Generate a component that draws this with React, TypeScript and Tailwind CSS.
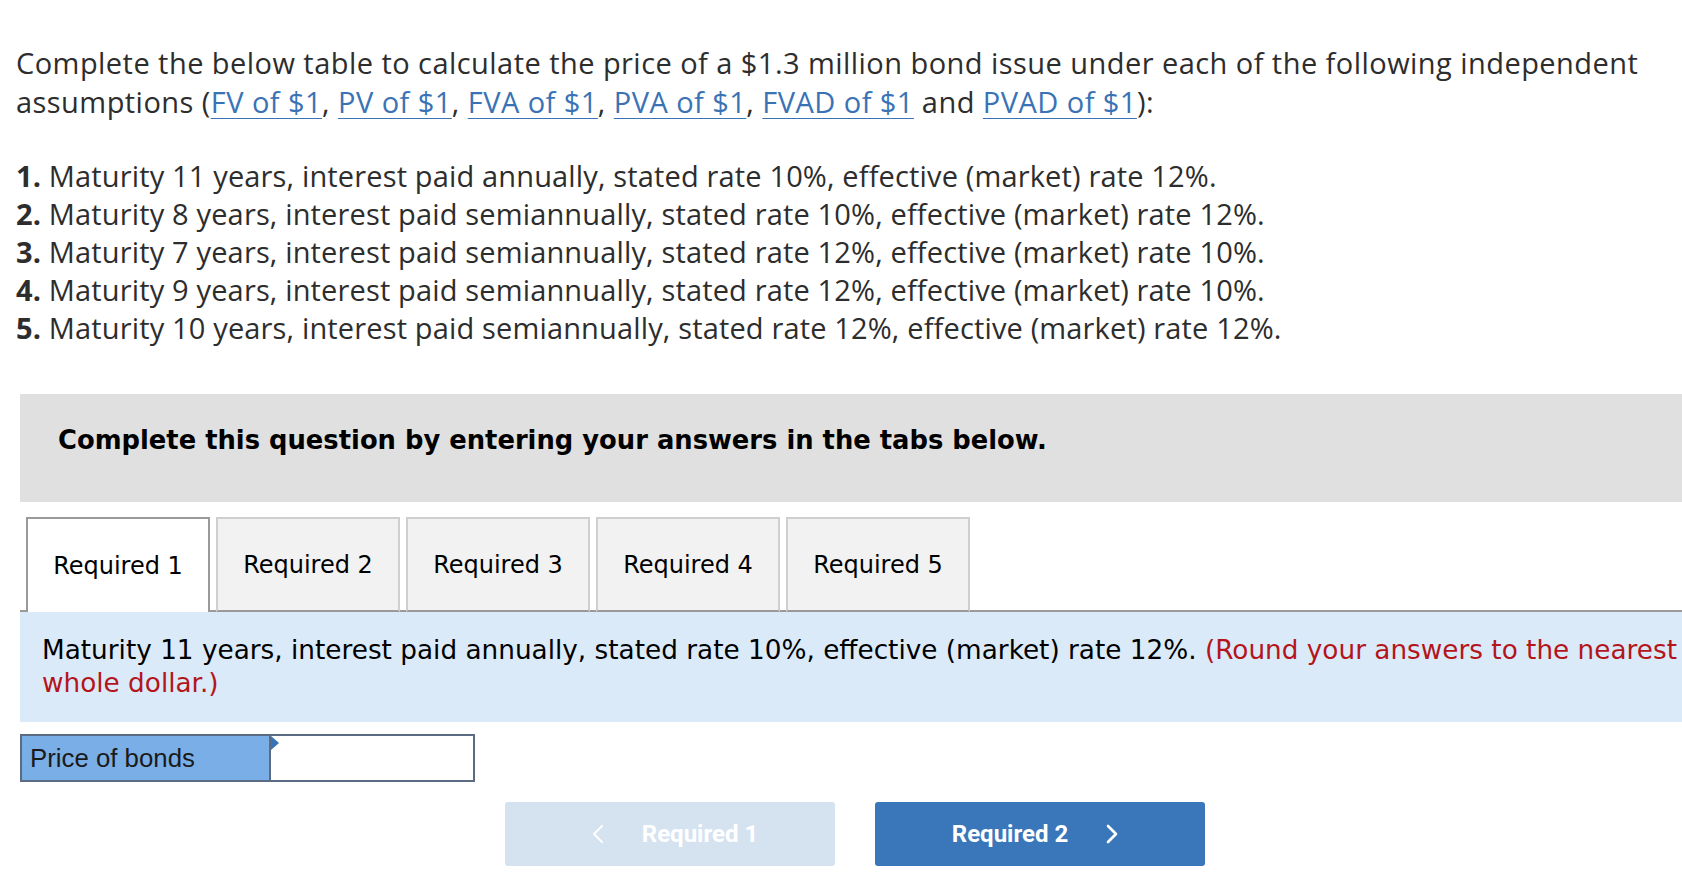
import { ChevronLeft, ChevronRight } from 'lucide-react';

const LINKS = ['FV of $1', 'PV of $1', 'FVA of $1', 'PVA of $1', 'FVAD of $1', 'PVAD of $1'];

const ITEMS = [
  'Maturity 11 years, interest paid annually, stated rate 10%, effective (market) rate 12%.',
  'Maturity 8 years, interest paid semiannually, stated rate 10%, effective (market) rate 12%.',
  'Maturity 7 years, interest paid semiannually, stated rate 12%, effective (market) rate 10%.',
  'Maturity 9 years, interest paid semiannually, stated rate 12%, effective (market) rate 10%.',
  'Maturity 10 years, interest paid semiannually, stated rate 12%, effective (market) rate 12%.',
];

const TABS = ['Required 1', 'Required 2', 'Required 3', 'Required 4', 'Required 5'];

function Link({ children }: { children: string }) {
  return <a className="text-[#3a73b5] underline underline-offset-[5px] decoration-1">{children}</a>;
}

export default function App() {
  return (
    <div className="w-full h-[873px] overflow-hidden bg-white">
      <div className="w-[1710px] pt-[43px]">
        {/* question text */}
        <div className="pl-4 font-['Open_Sans','Noto_Sans',sans-serif] text-[29px] leading-[39px] text-[#2d2d2d] whitespace-nowrap">
          <div className="tracking-[0.45px]">
            <p>Complete the below table to calculate the price of a $1.3 million bond issue under each of the following independent</p>
            <p>
              assumptions (
              {LINKS.map((l, i) => (
                <span key={l}>
                  <Link>{l}</Link>
                  {i < LINKS.length - 2 ? ', ' : i === LINKS.length - 2 ? ' and ' : ''}
                </span>
              ))}
              ):
            </p>
          </div>

          <ol className="mt-9 leading-[38px] tracking-[0.15px]">
            {ITEMS.map((t, i) => (
              <li key={i}>
                <span className="font-bold">{i + 1}.</span> {t}
              </li>
            ))}
          </ol>
        </div>

        {/* instruction banner */}
        <div className="ml-5 mt-[47px] bg-[#e0e0e0] pl-[38px] pt-[29px] pb-[45px]">
          <p className="font-['DejaVu_Sans','Verdana',sans-serif] font-bold text-[25.8px] leading-[34px] text-black">
            Complete this question by entering your answers in the tabs below.
          </p>
        </div>

        {/* tabs */}
        <div className="ml-5 mt-[15px] flex items-end font-['DejaVu_Sans','Verdana',sans-serif] text-[24px] text-black">
          <div className="w-[6px] h-[95px] border-b-2 border-[#9a9a9a]" />
          {TABS.map((t, i) => (
            <div key={t} className="flex items-end">
              <div
                className={
                  i === 0
                    ? 'w-[184px] h-[95px] flex items-center justify-center bg-white border-2 border-b-0 border-[#9a9a9a]'
                    : 'w-[184px] h-[95px] flex items-center justify-center bg-[#f2f2f2] border-2 border-[#cfcfcf] border-b-[#9a9a9a]'
                }
              >
                {t}
              </div>
              <div className="w-[6px] h-[95px] border-b-2 border-[#9a9a9a]" />
            </div>
          ))}
          <div className="flex-1 h-[95px] border-b-2 border-[#9a9a9a]" />
        </div>

        {/* prompt */}
        <div className="ml-5 bg-[#dbeaf8] pl-[22px] pt-[22px] pb-[22px] font-['DejaVu_Sans','Verdana',sans-serif] text-[26.3px] leading-[33px] text-black whitespace-nowrap">
          <p>
            Maturity 11 years, interest paid annually, stated rate 10%, effective (market) rate 12%.{' '}
            <span className="text-[#b3151b]">
              (Round your answers to the nearest
              <br />
              whole dollar.)
            </span>
          </p>
        </div>

        {/* answer row */}
        <div className="ml-5 mt-[12px] flex h-[48px] w-[455px] border-2 border-[#5b6b82] font-['Liberation_Sans','Arial',sans-serif] text-[25.8px] text-[#1a1a1a]">
          <div className="w-[249px] bg-[#7aaee6] flex items-center pl-2 border-r-2 border-[#5b6b82]">Price of bonds</div>
          <div className="relative flex-1 bg-white">
            <span className="absolute left-0 top-0 w-0 h-0 border-t-[7px] border-b-[7px] border-l-[8px] border-t-transparent border-b-transparent border-l-[#3a73b5]" />
          </div>
        </div>

        {/* nav buttons */}
        <div className="mt-[20px] flex justify-center gap-10 font-['Roboto','Lato',sans-serif] font-bold text-[24px] text-white">
          <button className="w-[330px] h-[64px] rounded-[3px] bg-[#d5e2f0] flex items-center justify-center gap-7">
            <ChevronLeft className="w-8 h-8" strokeWidth={1.5} />
            <span>Required 1</span>
          </button>
          <button className="w-[330px] h-[64px] rounded-[3px] bg-[#3a76ba] flex items-center justify-center gap-7">
            <span>Required 2</span>
            <ChevronRight className="w-8 h-8" strokeWidth={2} />
          </button>
        </div>
      </div>
    </div>
  );
}
